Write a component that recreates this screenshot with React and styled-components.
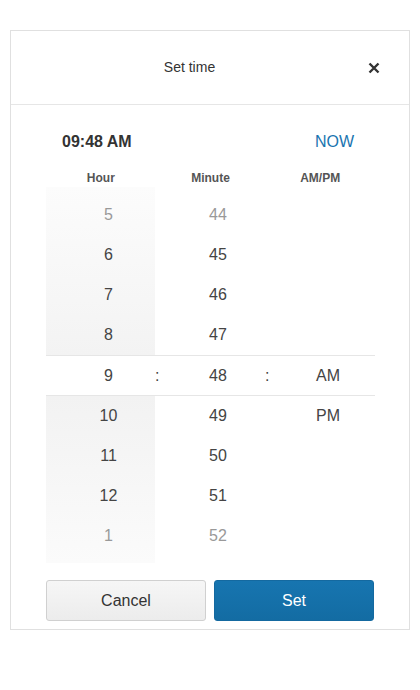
import styled, { createGlobalStyle } from "styled-components";

const GlobalStyle = createGlobalStyle`
  body {
    margin: 0;
    background: #fff;
    font-family: "Liberation Sans", Arial, sans-serif;
  }
`;

const COLUMNS = "109px 16px 94px 16px 94px";

const above = [
  { h: "5", m: "44", faded: true },
  { h: "6", m: "45" },
  { h: "7", m: "46" },
  { h: "8", m: "47" },
];

const below = [
  { h: "10", m: "49", p: "PM" },
  { h: "11", m: "50" },
  { h: "12", m: "51" },
  { h: "1", m: "52", faded: true },
];

const App = () => {
  return (
    <>
      <GlobalStyle />
      <Card>
        <Header>
          <Title>Set time</Title>
          <CloseButton aria-label="Close">
            <svg width="12" height="12" viewBox="0 0 12 12">
              <path d="M1.5 1.5 L10.5 10.5 M10.5 1.5 L1.5 10.5" stroke="#333" strokeWidth="2.4" />
            </svg>
          </CloseButton>
        </Header>
        <Body>
          <TimeRow>
            <Current>09:48 AM</Current>
            <NowButton>NOW</NowButton>
          </TimeRow>
          <Labels>
            <span>Hour</span>
            <span>Minute</span>
            <span>AM/PM</span>
          </Labels>
          <Section $top>
            {above.map((r) => (
              <Row key={r.h} $faded={r.faded}>
                <HourCell>{r.h}</HourCell>
                <span />
                <Cell>{r.m}</Cell>
                <span />
                <Cell>{r.p}</Cell>
              </Row>
            ))}
          </Section>
          <Selected>
            <HourCell>9</HourCell>
            <Colon>:</Colon>
            <Cell>48</Cell>
            <Colon>:</Colon>
            <Cell>AM</Cell>
          </Selected>
          <Section>
            {below.map((r) => (
              <Row key={r.h} $faded={r.faded}>
                <HourCell>{r.h}</HourCell>
                <span />
                <Cell>{r.m}</Cell>
                <span />
                <Cell>{r.p}</Cell>
              </Row>
            ))}
          </Section>
          <Actions>
            <Button>Cancel</Button>
            <Button $primary>Set</Button>
          </Actions>
        </Body>
      </Card>
    </>
  );
};

const Card = styled.div`
  box-sizing: border-box;
  width: 400px;
  height: 600px;
  margin: 30px 0 0 10px;
  border: 1px solid #e0e0e0;
  background: #fff;
  color: #333;
`;

const Header = styled.div`
  display: flex;
  align-items: center;
  height: 73px;
  padding: 0 20px 0 9px;
  border-bottom: 1px solid #e6e6e6;
`;

const Title = styled.div`
  flex: 1;
  text-align: center;
  font-size: 14px;
  color: #333;
  margin-bottom: 1px;
`;

const CloseButton = styled.button`
  width: 30px;
  height: 30px;
  display: flex;
  align-items: center;
  justify-content: center;
  border: none;
  background: none;
  padding: 0;
  cursor: pointer;
`;

const Body = styled.div`
  padding: 21px 34px 0 35px;
`;

const TimeRow = styled.div`
  display: flex;
  align-items: center;
  justify-content: space-between;
  height: 32px;
  padding: 0 21px 0 16px;
`;

const Current = styled.div`
  font-size: 16px;
  font-weight: bold;
  color: #333;
`;

const NowButton = styled.button`
  border: none;
  background: none;
  padding: 0;
  font-family: inherit;
  font-size: 16px;
  color: #1a74b0;
  cursor: pointer;
`;

const Labels = styled.div`
  display: grid;
  grid-template-columns: repeat(3, 1fr);
  margin-top: 12px;
  height: 17px;
  line-height: 17px;
  font-size: 12px;
  font-weight: bold;
  color: #555;
  text-align: center;
`;

const Section = styled.div`
  display: flex;
  flex-direction: column;
  padding: ${(p) => (p.$top ? "8px 0 0" : "0 0 7px")};
  background: ${(p) =>
      p.$top
        ? "linear-gradient(to bottom, #fcfcfc, #f3f3f3)"
        : "linear-gradient(to bottom, #f2f2f2, #fbfbfb)"}
    0 0 / 109px 100% no-repeat;
`;

const Row = styled.div`
  display: grid;
  grid-template-columns: ${COLUMNS};
  height: 40px;
  align-items: center;
  font-size: 16px;
  color: ${(p) => (p.$faded ? "#999" : "#444")};
`;

const Cell = styled.span`
  text-align: center;
`;

const HourCell = styled(Cell)`
  padding-left: 16px;
`;

const Selected = styled.div`
  display: grid;
  grid-template-columns: ${COLUMNS};
  height: 39px;
  align-items: center;
  border-top: 1px solid #e6e6e6;
  border-bottom: 1px solid #e6e6e6;
  background: #fff;
  font-size: 16px;
  color: #444;
`;

const Colon = styled.span`
  text-align: left;
`;

const Actions = styled.div`
  display: grid;
  grid-template-columns: 1fr 1fr;
  gap: 8px;
  margin-top: 17px;
  padding-right: 1px;
`;

const Button = styled.button`
  height: 41px;
  border-radius: 3px;
  font-family: inherit;
  font-size: 16px;
  cursor: pointer;
  border: 1px solid ${(p) => (p.$primary ? "#1469a0" : "#d0d0d0")};
  color: ${(p) => (p.$primary ? "#fff" : "#333")};
  background: ${(p) =>
    p.$primary
      ? "linear-gradient(to bottom, #1775b0, #136ca3)"
      : "linear-gradient(to bottom, #f6f6f6, #ececec)"};
`;

export default App;
